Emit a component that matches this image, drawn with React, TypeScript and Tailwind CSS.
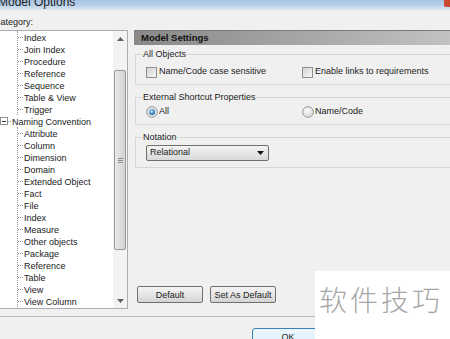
import React from "react";

const groupA = ["Index", "Join Index", "Procedure", "Reference", "Sequence", "Table & View", "Trigger"];
const groupB = [
  "Attribute", "Column", "Dimension", "Domain", "Extended Object", "Fact", "File", "Index",
  "Measure", "Other objects", "Package", "Reference", "Table", "View", "View Column",
];

function ChildRow({ label }: { label: string }) {
  return (
    <div className="flex items-center h-[12px]">
      <span className="w-[5px] border-t border-dotted border-[#9a9a9a] mr-[1px]" />
      <span className="leading-[12px] pt-[1px] whitespace-nowrap">{label}</span>
    </div>
  );
}

function Checkbox() {
  return <span className="inline-block w-[11px] h-[11px] border border-[#8e8f8f] bg-gradient-to-br from-[#d4d4d4] to-[#f6f6f6] shrink-0" />;
}

function Radio({ checked }: { checked?: boolean }) {
  return (
    <svg width="12" height="12" viewBox="0 0 12 12" className="shrink-0">
      <defs>
        <radialGradient id={checked ? "rg1" : "rg0"} cx="0.4" cy="0.35" r="0.7">
          <stop offset="0" stopColor={checked ? "#bfe3ff" : "#ffffff"} />
          <stop offset="1" stopColor={checked ? "#1b5fa6" : "#d8d8d8"} />
        </radialGradient>
      </defs>
      <circle cx="6" cy="6" r="5.3" fill="#f0f0f0" stroke="#8e8f8f" strokeWidth="1" />
      {checked ? (
        <circle cx="6" cy="6" r="3.2" fill="url(#rg1)" />
      ) : (
        <circle cx="6" cy="6" r="4" fill="url(#rg0)" />
      )}
    </svg>
  );
}

function Btn({ label, w }: { label: string; w: string }) {
  return (
    <div className={`${w} h-[17px] border border-[#707070] rounded-[2px] bg-gradient-to-b from-[#f4f4f4] via-[#e6e6e6] to-[#d4d4d4] flex items-center justify-center text-[9px] leading-[10px] text-[#1a1a1a]`}>
      {label}
    </div>
  );
}

export default function App() {
  return (
    <div className="relative w-[450px] h-[339px] overflow-hidden bg-[#f0f0f0] font-['Liberation_Sans',Arial,sans-serif] text-[#1a1a1a]">
      {/* title bar */}
      <div className="h-[10px] flex overflow-hidden bg-gradient-to-b from-[#a9c5e3] via-[#b7cfe9] to-[#dbe7f3]">
        <div className="-mt-[5px] -ml-[2px] text-[12px] leading-[14px] text-[#1e1e1e] whitespace-nowrap">Model Options</div>
        <div className="flex-1" />
        <div className="w-[6px] h-[7px] bg-[#c8472d] rounded-bl-[2px]" />
      </div>

      {/* category label */}
      <div className="h-[20px] pt-[7px]">
        <div className="-ml-[6px] text-[9px] leading-[10px] whitespace-nowrap">Category:</div>
      </div>

      {/* main row */}
      <div className="flex h-[279px]">
        {/* tree list */}
        <div className="-ml-[1px] w-[129px] h-[279px] border border-[#a9aeb5] bg-white flex">
          <div className="flex-1 overflow-hidden text-[9px] text-[#1a1a1a]">
            <div className="ml-[17px] border-l border-dotted border-[#9a9a9a]">
              {groupA.map((l, i) => (
                <ChildRow key={"a" + i} label={l} />
              ))}
            </div>
            <div className="flex items-center h-[12px]">
              <span className="w-[8px] h-[8px] border border-[#919191] bg-white flex items-center justify-center">
                <span className="w-[4px] border-t border-[#333]" />
              </span>
              <span className="w-[3px] border-t border-dotted border-[#9a9a9a] mr-[1px]" />
              <span className="leading-[12px] pt-[1px] whitespace-nowrap">Naming Convention</span>
            </div>
            <div className="ml-[17px] border-l border-dotted border-[#9a9a9a]">
              {groupB.map((l, i) => (
                <ChildRow key={"b" + i} label={l} />
              ))}
            </div>
          </div>
          {/* scrollbar */}
          <div className="w-[14px] bg-[#f3f3f3] flex flex-col items-center">
            <div className="h-[15px] flex items-center justify-center">
              <svg width="7" height="4" viewBox="0 0 7 4"><path d="M0 4 L3.5 0 L7 4 Z" fill="#606060" /></svg>
            </div>
            <div className="h-[24px]" />
            <div className="w-[12px] h-[180px] border border-[#9a9a9a] rounded-[2px] bg-gradient-to-r from-[#e9e9e9] to-[#d3d3d3] flex flex-col items-center justify-center gap-[1px]">
              <span className="w-[5px] border-t border-[#8a8a8a]" />
              <span className="w-[5px] border-t border-[#8a8a8a]" />
              <span className="w-[5px] border-t border-[#8a8a8a]" />
            </div>
            <div className="flex-1" />
            <div className="h-[15px] flex items-center justify-center">
              <svg width="7" height="4" viewBox="0 0 7 4"><path d="M0 0 L3.5 4 L7 0 Z" fill="#606060" /></svg>
            </div>
          </div>
        </div>

        {/* right panel */}
        <div className="ml-[6px] flex-1 flex flex-col">
          <div className="h-[15px] bg-gradient-to-r from-[#888888] to-[#c2c2c2] flex items-center pl-[7px] pt-[1px] text-[9.5px] font-bold text-[#111] border-t border-[#7a7a7a]">
            Model Settings
          </div>

          <fieldset className="mt-[4px] ml-[1px] -mr-[4px] border border-[#d6d6d6] px-[10px] pt-[7px] pb-[6px]">
            <legend className="-ml-[3px] px-0 text-[9px] leading-[10px]">All Objects</legend>
            <div className="flex items-center h-[12px] text-[9px]">
              <div className="w-[156px] flex items-center gap-[2px]">
                <Checkbox />
                <span className="whitespace-nowrap">Name/Code case sensitive</span>
              </div>
              <div className="flex items-center gap-[2px]">
                <Checkbox />
                <span className="whitespace-nowrap">Enable links to requirements</span>
              </div>
            </div>
          </fieldset>

          <fieldset className="mt-[7px] ml-[1px] -mr-[4px] border border-[#d6d6d6] px-[10px] pt-[4px] pb-[6px]">
            <legend className="-ml-[3px] px-0 text-[9px] leading-[10px]">External Shortcut Properties</legend>
            <div className="flex items-center h-[12px] text-[9px]">
              <div className="w-[156px] flex items-center gap-[1px]">
                <Radio checked />
                <span className="whitespace-nowrap">All</span>
              </div>
              <div className="flex items-center gap-[1px]">
                <Radio />
                <span className="whitespace-nowrap">Name/Code</span>
              </div>
            </div>
          </fieldset>

          <fieldset className="mt-[7px] ml-[1px] -mr-[4px] border border-[#d6d6d6] px-[10px] pt-[3px] pb-[6px]">
            <legend className="-ml-[3px] px-0 text-[9px] leading-[10px]">Notation</legend>
            <div className="w-[123px] h-[16px] border border-[#707070] rounded-[2px] bg-gradient-to-b from-[#f3f3f3] to-[#d9d9d9] flex items-center pl-[3px] pr-[4px] text-[9px]">
              <span className="flex-1">Relational</span>
              <svg width="7" height="4" viewBox="0 0 7 4"><path d="M0 0 L3.5 4 L7 0 Z" fill="#111" /></svg>
            </div>
          </fieldset>

          <div className="flex-1" />
          <div className="flex gap-[7px] ml-[3px] mb-[6px]">
            <Btn label="Default" w="w-[66px]" />
            <Btn label="Set As Default" w="w-[66px]" />
          </div>
        </div>
      </div>

      {/* separator + ok */}
      <div className="mt-[7px] border-t border-[#b9b9b9]" />
      <div className="pl-[252px] pt-[11px]">
        <div className="w-[72px] h-[22px] border border-[#3c7fb1] rounded-[3px] bg-gradient-to-b from-[#eaf6fd] to-[#d9f0fc] flex justify-center pt-[2px] text-[9px]">
          OK
        </div>
      </div>

      {/* watermark */}
      <div className="absolute right-0 bottom-0 w-[135px] h-[68px] bg-white">
        <div className="pl-[4px] pt-[12px] text-[28px] leading-[32px] tracking-[3px] text-[#a6a6a6] whitespace-nowrap font-['Noto_Sans_CJK_SC',sans-serif] font-light">
          软件技巧
        </div>
      </div>
    </div>
  );
}
